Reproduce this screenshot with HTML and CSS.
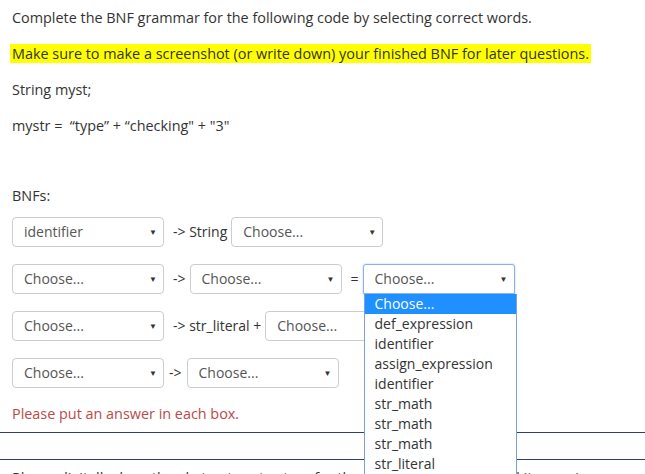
FILE: index.html
```html
<!DOCTYPE html>
<html lang="en">
<head>
  <meta charset="UTF-8" />
  <title>BNF question</title>
  <link rel="stylesheet" href="styles.css">
</head>
<body>
  <div class="question">
    <p>Complete the BNF grammar for the following code by selecting correct words.</p>
    <p><span class="mark">Make sure to make a screenshot (or write down) your finished BNF for later questions.</span></p>
    <p>String myst;</p>
    <p>mystr =&nbsp; “type” + “checking" + "3"</p>
    <p class="bnf-title">BNFs:</p>

    <div class="row">
      <div class="select"><span>identifier</span><span class="arrow">▼</span></div>
      <span class="sep">-&gt; String</span>
      <div class="select"><span>Choose...</span><span class="arrow">▼</span></div>
    </div>

    <div class="row">
      <div class="select"><span>Choose...</span><span class="arrow">▼</span></div>
      <span class="sep">-&gt;</span>
      <div class="select"><span>Choose...</span><span class="arrow">▼</span></div>
      <span class="sep">=</span>
      <div class="select open"><span>Choose...</span><span class="arrow">▼</span>
        <ul class="options">
          <li class="active">Choose...</li>
          <li>def_expression</li>
          <li>identifier</li>
          <li>assign_expression</li>
          <li>identifier</li>
          <li>str_math</li>
          <li>str_math</li>
          <li>str_math</li>
          <li>str_literal</li>
        </ul>
      </div>
    </div>

    <div class="row">
      <div class="select"><span>Choose...</span><span class="arrow">▼</span></div>
      <span class="sep">-&gt; str_literal +</span>
      <div class="select"><span>Choose...</span><span class="arrow">▼</span></div>
    </div>

    <div class="row">
      <div class="select"><span>Choose...</span><span class="arrow">▼</span></div>
      <span class="sep tight">-&gt;</span>
      <div class="select"><span>Choose...</span><span class="arrow">▼</span></div>
    </div>

    <p class="error">Please put an answer in each box.</p>
  </div>

  <hr>
  <hr class="second">

  <div class="question">
    <p>Please digitally draw the abstract syntax tree for the code above and upload it as an image.</p>
  </div>
</body>
</html>
```

FILE: styles.css
```css
body {
  margin: 0;
  font-family: "Open Sans", sans-serif;
  font-size: 14px;
  line-height: 20px;
  color: #333;
}
.question {
  padding: 8px 12px 0;
}
p {
  margin: 0 0 16px;
  font-size: 14.4px;
}
.mark {
  background-color: #ffff00;
  padding: 0 2px;
  margin-left: -2px;
}
.bnf-title {
  margin-top: 50px;
  margin-bottom: 11px;
}
.row {
  display: flex;
  align-items: center;
  margin-bottom: 17px;
}
.select {
  position: relative;
  box-sizing: border-box;
  width: 152px;
  height: 30px;
  padding: 0 6px 0 11px;
  display: flex;
  align-items: center;
  justify-content: space-between;
  border: 1px solid #ccc;
  border-radius: 4px;
  background: #fff;
  color: #555;
}
.arrow {
  font-size: 8px;
  color: #333;
}
.sep {
  margin: 0 4px 0 9px;
}
.sep.tight {
  margin: 0 5px;
}
.select.open {
  border-color: #8fb1ec;
  box-shadow: 0 0 2px #a9c4f2;
  border-radius: 3px 3px 0 0;
}
.options {
  position: absolute;
  top: 29px;
  left: 0;
  width: 153px;
  box-sizing: border-box;
  margin: 0;
  padding: 0;
  list-style: none;
  background: #fff;
  border: 1px solid #7d9fde;
  border-top: none;
  color: #333;
  z-index: 2;
}
.options li {
  height: 20px;
  line-height: 20px;
  padding-left: 10px;
}
.options li.active {
  background-color: #1e90ff;
  color: #fff;
}
.error {
  margin-top: -1px;
  margin-bottom: 0;
  color: #b94a48;
}
hr {
  margin: 8px 0 0;
  border: none;
  border-top: 1px solid #2c3e80;
}
hr.second {
  margin-top: 26px;
}
```
